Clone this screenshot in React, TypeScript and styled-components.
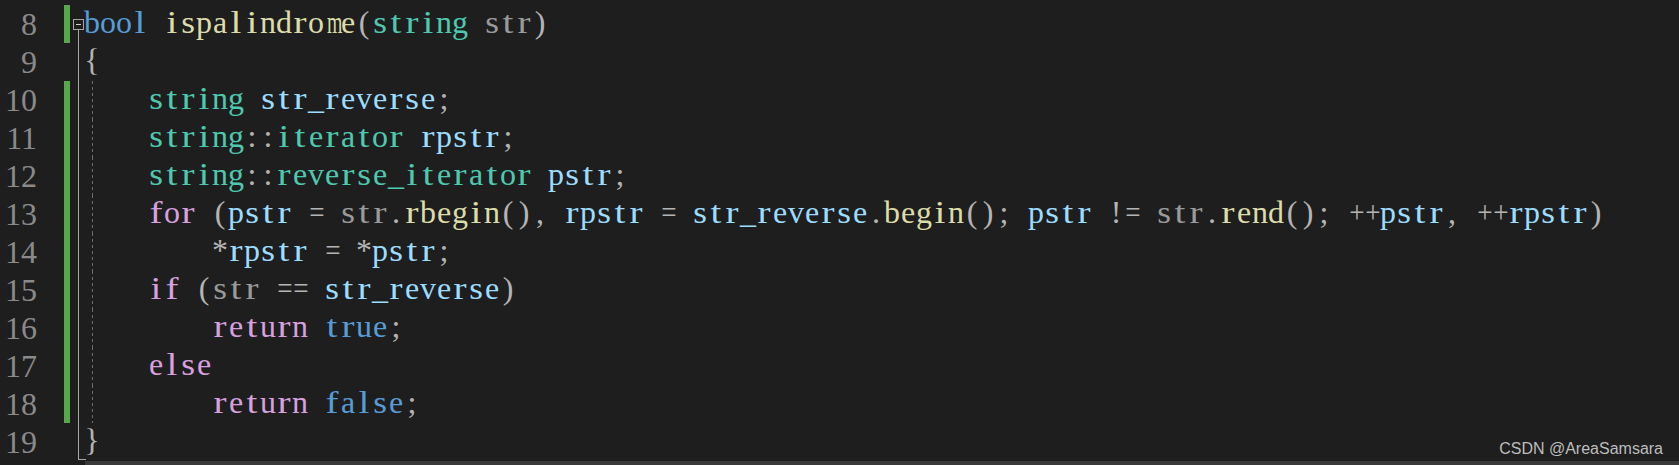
import React from "react";
import styled, { createGlobalStyle } from "styled-components";

const GlobalStyle = createGlobalStyle`
  html, body {
    margin: 0;
    padding: 0;
    background: #1e1e1e;
  }
  body {
    width: 1679px;
    height: 465px;
    overflow: hidden;
  }
`;

type Kind = "kw" | "ctrl" | "fn" | "type" | "param" | "local" | "punc";

const palette: Record<Kind, string> = {
  kw: "#569cd6",
  ctrl: "#d8a0df",
  fn: "#dcdcaa",
  type: "#4ec9b0",
  param: "#9a9a9a",
  local: "#9cdcfe",
  punc: "#b4b4b4",
};

type Tok = [string, Kind];
type Fold = "start" | "mid" | "end";

interface Line {
  no: number;
  changed: boolean;
  fold: Fold;
  guide: boolean;
  toks: Tok[];
}

const lines: Line[] = [
  {
    no: 8,
    changed: true,
    fold: "start",
    guide: false,
    toks: [
      ["bool", "kw"],
      [" ", "punc"],
      ["ispalindrome", "fn"],
      ["(", "punc"],
      ["string", "type"],
      [" ", "punc"],
      ["str", "param"],
      [")", "punc"],
    ],
  },
  { no: 9, changed: false, fold: "mid", guide: false, toks: [["{", "punc"]] },
  {
    no: 10,
    changed: true,
    fold: "mid",
    guide: true,
    toks: [
      ["    ", "punc"],
      ["string", "type"],
      [" ", "punc"],
      ["str_reverse", "local"],
      [";", "punc"],
    ],
  },
  {
    no: 11,
    changed: true,
    fold: "mid",
    guide: true,
    toks: [
      ["    ", "punc"],
      ["string", "type"],
      ["::", "punc"],
      ["iterator", "type"],
      [" ", "punc"],
      ["rpstr", "local"],
      [";", "punc"],
    ],
  },
  {
    no: 12,
    changed: true,
    fold: "mid",
    guide: true,
    toks: [
      ["    ", "punc"],
      ["string", "type"],
      ["::", "punc"],
      ["reverse_iterator", "type"],
      [" ", "punc"],
      ["pstr", "local"],
      [";", "punc"],
    ],
  },
  {
    no: 13,
    changed: true,
    fold: "mid",
    guide: true,
    toks: [
      ["    ", "punc"],
      ["for", "ctrl"],
      [" (", "punc"],
      ["pstr", "local"],
      [" = ", "punc"],
      ["str", "param"],
      [".", "punc"],
      ["rbegin", "fn"],
      ["(), ", "punc"],
      ["rpstr", "local"],
      [" = ", "punc"],
      ["str_reverse", "local"],
      [".", "punc"],
      ["begin", "fn"],
      ["(); ", "punc"],
      ["pstr", "local"],
      [" != ", "punc"],
      ["str", "param"],
      [".", "punc"],
      ["rend", "fn"],
      ["(); ++", "punc"],
      ["pstr", "local"],
      [", ++", "punc"],
      ["rpstr", "local"],
      [")", "punc"],
    ],
  },
  {
    no: 14,
    changed: true,
    fold: "mid",
    guide: true,
    toks: [
      ["        *", "punc"],
      ["rpstr", "local"],
      [" = *", "punc"],
      ["pstr", "local"],
      [";", "punc"],
    ],
  },
  {
    no: 15,
    changed: true,
    fold: "mid",
    guide: true,
    toks: [
      ["    ", "punc"],
      ["if", "ctrl"],
      [" (", "punc"],
      ["str", "param"],
      [" == ", "punc"],
      ["str_reverse", "local"],
      [")", "punc"],
    ],
  },
  {
    no: 16,
    changed: true,
    fold: "mid",
    guide: true,
    toks: [
      ["        ", "punc"],
      ["return", "ctrl"],
      [" ", "punc"],
      ["true", "kw"],
      [";", "punc"],
    ],
  },
  {
    no: 17,
    changed: true,
    fold: "mid",
    guide: true,
    toks: [
      ["    ", "punc"],
      ["else", "ctrl"],
    ],
  },
  {
    no: 18,
    changed: true,
    fold: "mid",
    guide: true,
    toks: [
      ["        ", "punc"],
      ["return", "ctrl"],
      [" ", "punc"],
      ["false", "kw"],
      [";", "punc"],
    ],
  },
  { no: 19, changed: false, fold: "end", guide: false, toks: [["}", "punc"]] },
];

const serif = `"Liberation Serif", "DejaVu Serif", serif`;

const Editor = styled.div`
  position: relative;
  width: 1679px;
  height: 465px;
  box-sizing: border-box;
  padding-top: 5px;
  background: #1e1e1e;
  display: flex;
  flex-direction: column;
  overflow: hidden;
`;

const Row = styled.div`
  display: flex;
  align-items: stretch;
  height: 38px;
`;

const LineNo = styled.div`
  width: 37px;
  text-align: right;
  font-family: ${serif};
  font-size: 32px;
  line-height: 38px;
  color: #8a8a8a;
`;

const Gutter = styled.div`
  width: 27px;
`;

const ChangeBar = styled.div<{ $on: boolean }>`
  width: 6px;
  background: ${(p) => (p.$on ? "#57a84c" : "transparent")};
`;

const FoldCell = styled.div<{ $fold: Fold }>`
  position: relative;
  width: 14px;

  &::before {
    content: "";
    position: absolute;
    left: 8px;
    width: 1px;
    background: #a5a5a5;
    top: ${(p) => (p.$fold === "start" ? "24px" : "0")};
    height: ${(p) =>
      p.$fold === "start" ? "14px" : p.$fold === "end" ? "37px" : "38px"};
  }

  &::after {
    content: ${(p) => (p.$fold === "end" ? '""' : "none")};
    position: absolute;
    left: 8px;
    top: 36px;
    width: 8px;
    height: 1px;
    background: #a5a5a5;
  }
`;

const FoldBox = styled.div`
  position: absolute;
  left: 3px;
  top: 14px;
  width: 9px;
  height: 9px;
  border: 1px solid #a5a5a5;
  background: #1e1e1e;

  &::after {
    content: "";
    position: absolute;
    left: 2px;
    top: 4px;
    width: 5px;
    height: 1px;
    background: #d0d0d0;
  }
`;

const Code = styled.div<{ $guide: boolean }>`
  position: relative;
  flex: 1;
  white-space: pre;
  font-family: ${serif};
  font-size: 32px;
  line-height: 34px;

  &::before {
    content: ${(p) => (p.$guide ? '""' : "none")};
    position: absolute;
    left: 8px;
    top: 0;
    bottom: 0;
    width: 1px;
    background: repeating-linear-gradient(
      to bottom,
      #6e6e6e 0 3px,
      transparent 3px 6px
    );
  }
`;

const Tk = styled.span<{ $k: Kind }>`
  color: ${(p) => palette[p.$k]};
`;

/* one half-width cell of the editor's fixed-pitch grid */
const Cell = styled.span<{ $sx: number }>`
  display: inline-block;
  width: 16px;
  text-align: center;
  transform: ${(p) => (p.$sx !== 1 ? `scaleX(${p.$sx})` : "none")};
`;

const scaleOf = (c: string) => {
  if (c === "m" || c === "w") return 0.62;
  if (c === "M" || c === "W") return 0.56;
  if (c === "=" || c === "+") return 0.85;
  if ("iltfjr".includes(c)) return 1.22;
  if (c === "s") return 1.1;
  return 1;
};

const ScrollTrack = styled.div`
  margin-left: 85px;
  height: 4px;
  background: #3a3a3a;
`;

const Watermark = styled.div`
  position: absolute;
  right: 16px;
  bottom: 8px;
  font-family: "Liberation Sans", Arial, sans-serif;
  font-size: 16px;
  line-height: 16px;
  color: #bdbdbd;
`;

export default function App() {
  return (
    <>
      <GlobalStyle />
      <Editor>
        {lines.map((l) => (
          <Row key={l.no}>
            <LineNo>{l.no}</LineNo>
            <Gutter />
            <ChangeBar $on={l.changed} />
            <FoldCell $fold={l.fold}>{l.fold === "start" && <FoldBox />}</FoldCell>
            <Code $guide={l.guide}>
              {l.toks.map(([t, k], i) => (
                <Tk key={i} $k={k}>
                  {Array.from(t).map((c, j) => (
                    <Cell key={j} $sx={scaleOf(c)}>
                      {c === " " ? "\u00a0" : c}
                    </Cell>
                  ))}
                </Tk>
              ))}
            </Code>
          </Row>
        ))}
        <ScrollTrack />
        <Watermark>CSDN @AreaSamsara</Watermark>
      </Editor>
    </>
  );
}
